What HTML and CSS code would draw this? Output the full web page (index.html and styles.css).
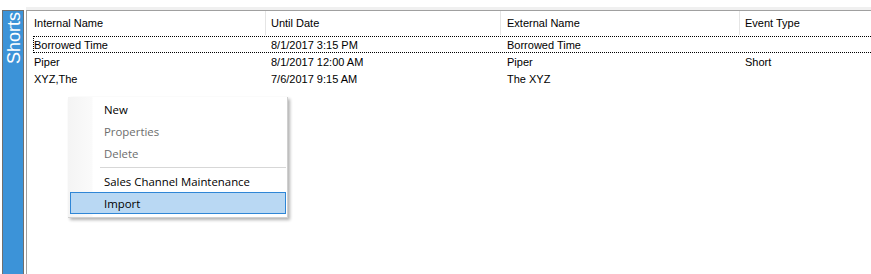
FILE: index.html
```html
<!DOCTYPE html>
<html lang="en">
<head>
  <meta charset="UTF-8" />
  <title>Shorts</title>
  <link rel="stylesheet" href="styles.css">
</head>
<body>
  <div class="app">
    <div class="tab"><span class="tab-label">Shorts</span></div>
    <div class="pane-wrap">
      <div class="band"></div>
      <div class="pane">
        <div class="list-header">
          <div class="col col-name">Internal Name</div>
          <div class="col col-date">Until Date</div>
          <div class="col col-ext">External Name</div>
          <div class="col col-type">Event Type</div>
        </div>
        <div class="row focused">
          <div class="col col-name">Borrowed Time</div>
          <div class="col col-date">8/1/2017 3:15 PM</div>
          <div class="col col-ext">Borrowed Time</div>
          <div class="col col-type"></div>
        </div>
        <div class="row">
          <div class="col col-name">Piper</div>
          <div class="col col-date">8/1/2017 12:00 AM</div>
          <div class="col col-ext">Piper</div>
          <div class="col col-type">Short</div>
        </div>
        <div class="row">
          <div class="col col-name">XYZ,The</div>
          <div class="col col-date">7/6/2017 9:15 AM</div>
          <div class="col col-ext">The XYZ</div>
          <div class="col col-type"></div>
        </div>
      </div>
    </div>
  </div>

  <div class="menu">
    <div class="menu-item">New</div>
    <div class="menu-item disabled">Properties</div>
    <div class="menu-item disabled">Delete</div>
    <div class="menu-sep"></div>
    <div class="menu-item">Sales Channel Maintenance</div>
    <div class="menu-item active">Import</div>
  </div>
</body>
</html>
```

FILE: styles.css
```css
:root {
  --frame-line: #a0a0a0;
  --tab-blue: #3c93d8;
  --tab-border: #6f6f6f;
  --band: #f0f0f0;
  --header-sep: #e5e5e5;
  --menu-hover: #b9d8f3;
  --menu-hover-border: #2f86d6;
  --disabled: #6d6d6d;
}

body {
  margin: 0;
  background-color: #ffffff;
  font-family: "Liberation Sans", Arial, sans-serif;
  font-size: 11px;
  color: #000000;
}

.app {
  display: flex;
  height: 274px;
  overflow: hidden;
}

/* vertical tab on the left */
.tab {
  margin: 10px 0 0 2px;
  width: 20px;
  background-color: var(--tab-blue);
  border: 1px solid var(--tab-border);
  border-bottom: none;
  display: flex;
  justify-content: center;
  align-items: flex-start;
}
.tab-label {
  writing-mode: vertical-rl;
  transform: rotate(180deg);
  color: #ffffff;
  font-size: 18px;
  padding-bottom: 1px;
  margin-left: 1px;
  line-height: 20px;
}

.pane-wrap {
  flex: 1;
  margin-left: 2px;
  padding-top: 7px;
  display: flex;
  flex-direction: column;
}
.band {
  height: 3px;
  background-color: var(--band);
}
.pane {
  flex: 1;
  border-top: 1px solid var(--frame-line);
  border-left: 1px solid var(--frame-line);
  background-color: #ffffff;
}

.list-header {
  display: flex;
  height: 24px;
  margin-bottom: 1px;
}
.list-header .col {
  line-height: 24px;
  border-right: 1px solid var(--header-sep);
}
.list-header .col-type {
  border-right: none;
}

.row {
  display: flex;
  height: 17px;
  line-height: 17px;
  border: 1px dotted transparent;
  border-left: none;
  border-right: none;
  box-sizing: border-box;
}
.row.focused {
  border: 1px dotted #000000;
  border-right: none;
  margin-left: 6px;
}
.row.focused .col-name {
  width: 232px;
  padding-left: 0;
}

.col {
  box-sizing: border-box;
  padding-left: 6px;
  white-space: nowrap;
}
.col-name { width: 239px; padding-left: 7px; }
.col-date { width: 235px; padding-left: 5px; }
.col-ext  { width: 239px; padding-left: 6px; }
.col-type { flex: 1; padding-left: 5px; }

/* context menu floating over the list */
.menu {
  position: absolute;
  left: 68px;
  top: 97px;
  width: 219px;
  padding: 1px 0 3px;
  background: linear-gradient(to right, #f4f4f4 0, #fafafa 24px, #ffffff 25px);
  border-right: 1px solid #cfcfcf;
  border-bottom: 1px solid #cfcfcf;
  box-shadow: 2px 2px 3px rgba(0, 0, 0, 0.3);
  font-family: "Open Sans", "Noto Sans", sans-serif;
  font-size: 11.4px;
}
.menu-item {
  height: 22px;
  line-height: 22px;
  margin: 0 1px 0 2px;
  padding-left: 33px;
  box-sizing: border-box;
  border: 1px solid transparent;
}
.menu-item.disabled {
  color: var(--disabled);
}
.menu-item.active {
  background-color: var(--menu-hover);
  border-color: var(--menu-hover-border);
}
.menu-sep {
  height: 1px;
  margin: 3px 1px 2px 32px;
  background-color: #d7d7d7;
}
```
